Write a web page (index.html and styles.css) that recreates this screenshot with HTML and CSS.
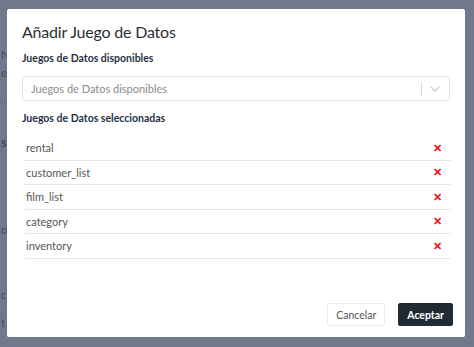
FILE: index.html
```html
<!DOCTYPE html>
<html lang="es">
<head>
<meta charset="utf-8">
<title>Añadir Juego de Datos</title>
<link rel="stylesheet" href="styles.css">
</head>
<body>
<div class="page">
  <div class="bg-line l1">N</div>
  <div class="bg-line l2">e</div>
  <div class="bg-sep"></div>
  <div class="bg-line l3 bold">s</div>
  <div class="bg-line l4">o</div>
  <div class="bg-line l5">c</div>
  <div class="bg-line l6">t</div>
</div>
<div class="overlay">
  <div class="modal">
    <h1 class="title">Añadir Juego de Datos</h1>
    <div class="label">Juegos de Datos disponibles</div>
    <div class="select">
      <span class="placeholder">Juegos de Datos disponibles</span>
      <span class="indicators">
        <span class="divider"></span>
        <svg class="chevron" width="12" height="8" viewBox="0 0 12 8"><path d="M1.5 1.5 L6 6 L10.5 1.5" fill="none" stroke="#cfcfcf" stroke-width="1.4"/></svg>
      </span>
    </div>
    <div class="label label-sel">Juegos de Datos seleccionadas</div>
    <ul class="list">
      <li class="row"><span>rental</span><span class="remove">✕</span></li>
      <li class="row"><span>customer_list</span><span class="remove">✕</span></li>
      <li class="row"><span>film_list</span><span class="remove">✕</span></li>
      <li class="row"><span>category</span><span class="remove">✕</span></li>
      <li class="row"><span>inventory</span><span class="remove">✕</span></li>
    </ul>
    <div class="footer">
      <button class="btn btn-cancel">Cancelar</button>
      <button class="btn btn-ok">Aceptar</button>
    </div>
  </div>
</div>
</body>
</html>
```
FILE: styles.css
```css
html, body {
  margin: 0;
  padding: 0;
  width: 474px;
  height: 347px;
  overflow: hidden;
  font-family: Lato, "Open Sans", sans-serif;
}
.page {
  position: absolute;
  inset: 0;
  background: #f4f5f7;
  color: #333;
  font-size: 12px;
}
.bg-line {
  position: absolute;
  left: 1px;
  line-height: 14px;
}
.bg-line.bold { font-weight: 700; font-size: 13px; }
.l1 { top: 48px; }
.l2 { top: 66px; }
.l3 { top: 135px; }
.l4 { top: 223px; }
.l5 { top: 288px; }
.l6 { top: 316px; }
.bg-sep {
  position: absolute;
  left: 0;
  width: 20px;
  top: 100px;
  height: 4px;
  background: #d8dbe2;
}
.overlay {
  position: absolute;
  inset: 0;
  background: rgba(74, 84, 106, 0.78);
  padding: 9px 9px 10px 7px;
  box-sizing: border-box;
}
.modal {
  background: #fff;
  width: 458px;
  height: 328px;
  box-sizing: border-box;
  padding: 13px 12px 0 15px;
  display: flex;
  flex-direction: column;
  border-radius: 2px;
}
.title {
  margin: 0;
  font-weight: 400;
  font-size: 16px;
  line-height: 20px;
  letter-spacing: -0.2px;
  color: #2a2f35;
}
.label {
  font-weight: 700;
  font-size: 10.5px;
  color: #1f3346;
  margin-top: 9px;
  line-height: 14px;
}
.label-sel {
  margin-top: 10px;
}
.select {
  margin-top: 11px;
  width: 428px;
  height: 25px;
  border: 1px solid #e3e3e3;
  border-radius: 2px;
  display: flex;
  align-items: center;
  justify-content: space-between;
  padding-left: 8px;
  box-sizing: border-box;
}
.placeholder {
  color: #8a8a8a;
  font-size: 11px;
}
.indicators {
  display: flex;
  align-items: center;
  height: 100%;
}
.divider {
  width: 1px;
  height: 14px;
  background: #dcdcdc;
}
.chevron {
  margin: 0 8px 0 7px;
}
.list {
  list-style: none;
  margin: 11px 0 0 3px;
  padding: 0;
  width: 426px;
}
.row {
  height: 24.5px;
  border-bottom: 1px solid #e6e6e6;
  box-sizing: border-box;
  display: flex;
  align-items: center;
  justify-content: space-between;
  padding-left: 1px;
  font-size: 11px;
  color: #555;
}
.remove {
  color: #e8141e;
  font-weight: 700;
  font-size: 11px;
  margin-right: 9px;
}
.footer {
  margin-top: auto;
  display: flex;
  justify-content: flex-end;
  gap: 13px;
  padding-bottom: 11px;
}
.btn {
  height: 23px;
  font-family: inherit;
  font-size: 10.5px;
  border-radius: 2px;
  padding: 0 8px;
  cursor: pointer;
}
.btn-cancel {
  background: #fff;
  border: 1px solid #ececec;
  color: #555;
}
.btn-ok {
  background: #1f2a33;
  border: 1px solid #1f2a33;
  color: #fff;
  font-weight: 700;
}
```
